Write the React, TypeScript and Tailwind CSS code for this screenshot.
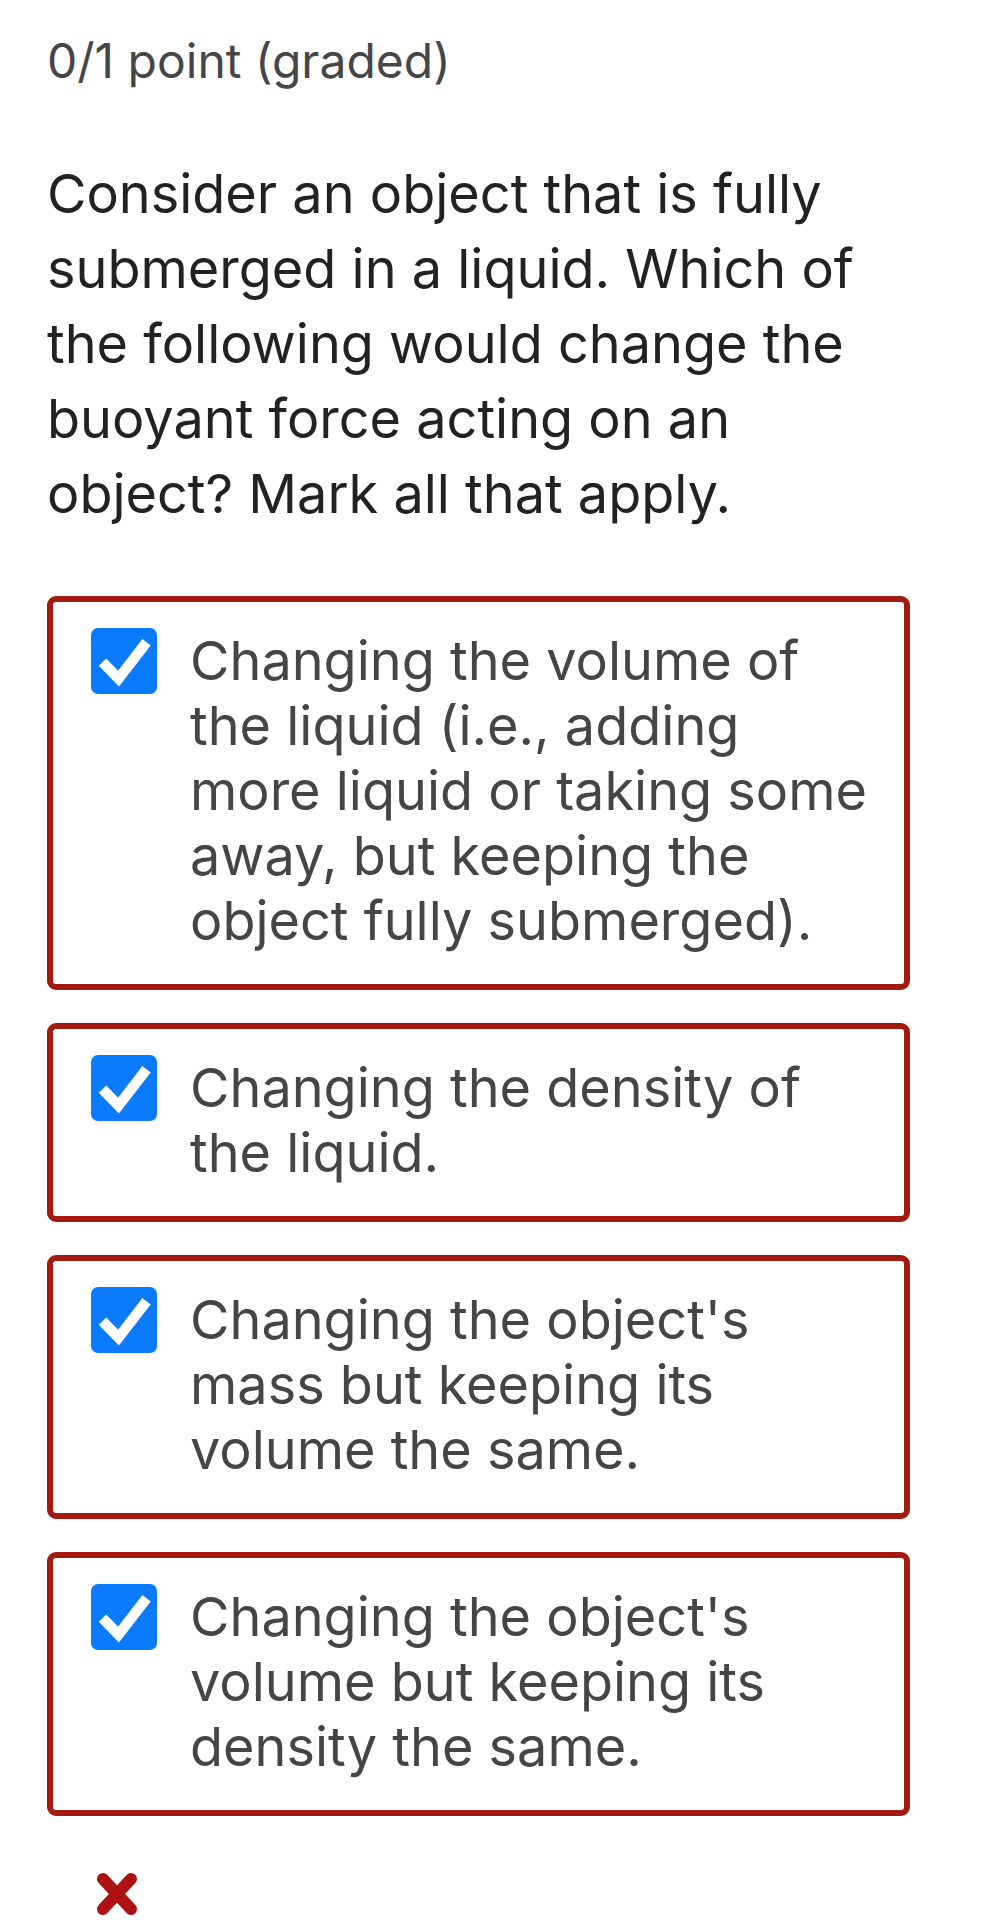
import React from 'react';

interface Choice {
  id: number;
  label: string;
  checked: boolean;
}

const choices: Choice[] = [
  {
    id: 1,
    label:
      'Changing the volume of the liquid (i.e., adding more liquid or taking some away, but keeping the object fully submerged).',
    checked: true,
  },
  { id: 2, label: 'Changing the density of the liquid.', checked: true },
  { id: 3, label: "Changing the object's mass but keeping its volume the same.", checked: true },
  { id: 4, label: "Changing the object's volume but keeping its density the same.", checked: true },
];

const CheckBox: React.FC<{ checked: boolean }> = ({ checked }) => (
  <span
    className={`flex h-[66px] w-[66px] shrink-0 items-center justify-center rounded-[7px] ${
      checked ? 'bg-[#0a7bff]' : 'border-2 border-gray-400 bg-white'
    }`}
  >
    {checked && (
      <svg viewBox="0 0 24 24" className="h-[66px] w-[66px]" fill="none">
        <path
          d="M4.2 12.4 L10 18.4 L20.2 5.2"
          stroke="white"
          strokeWidth="3.8"
          strokeLinecap="butt"
          strokeLinejoin="miter"
        />
      </svg>
    )}
  </span>
);

const App: React.FC = () => {
  return (
    <div className="min-h-screen bg-white font-['Inter',sans-serif]">
      <div className="pl-[47px] pr-[79px] pt-[32px]">
        {/* Header */}
        <p className="text-[48px] leading-[57.6px] text-[#464646]">0/1 point (graded)</p>

        {/* Question */}
        <p className="mt-[66px] text-[54px] leading-[75px] text-[#222222]">
          Consider an object that is fully submerged in a liquid. Which of the following would change
          the buoyant force acting on an object? Mark all that apply.
        </p>

        {/* Choices */}
        <div className="mt-[65px] flex flex-col gap-[33px]">
          {choices.map((choice) => (
            <label
              key={choice.id}
              className="flex items-start rounded-[9px] border-[6px] border-[#a31a10] pb-[31px] pl-[38px] pr-[32px] pt-[26px]"
            >
              <CheckBox checked={choice.checked} />
              <span className="ml-[33px] text-[54px] leading-[65px] text-[#454545]">{choice.label}</span>
            </label>
          ))}
        </div>

        {/* Result mark */}
        <div className="mt-[56px] pl-[49px]">
          <svg viewBox="0 0 42 44" className="h-[44px] w-[42px]" fill="none">
            <path
              d="M7 7 L35 37 M35 7 L7 37"
              stroke="#ad1111"
              strokeWidth="12"
              strokeLinecap="round"
            />
          </svg>
        </div>
      </div>
    </div>
  );
};

export default App;
